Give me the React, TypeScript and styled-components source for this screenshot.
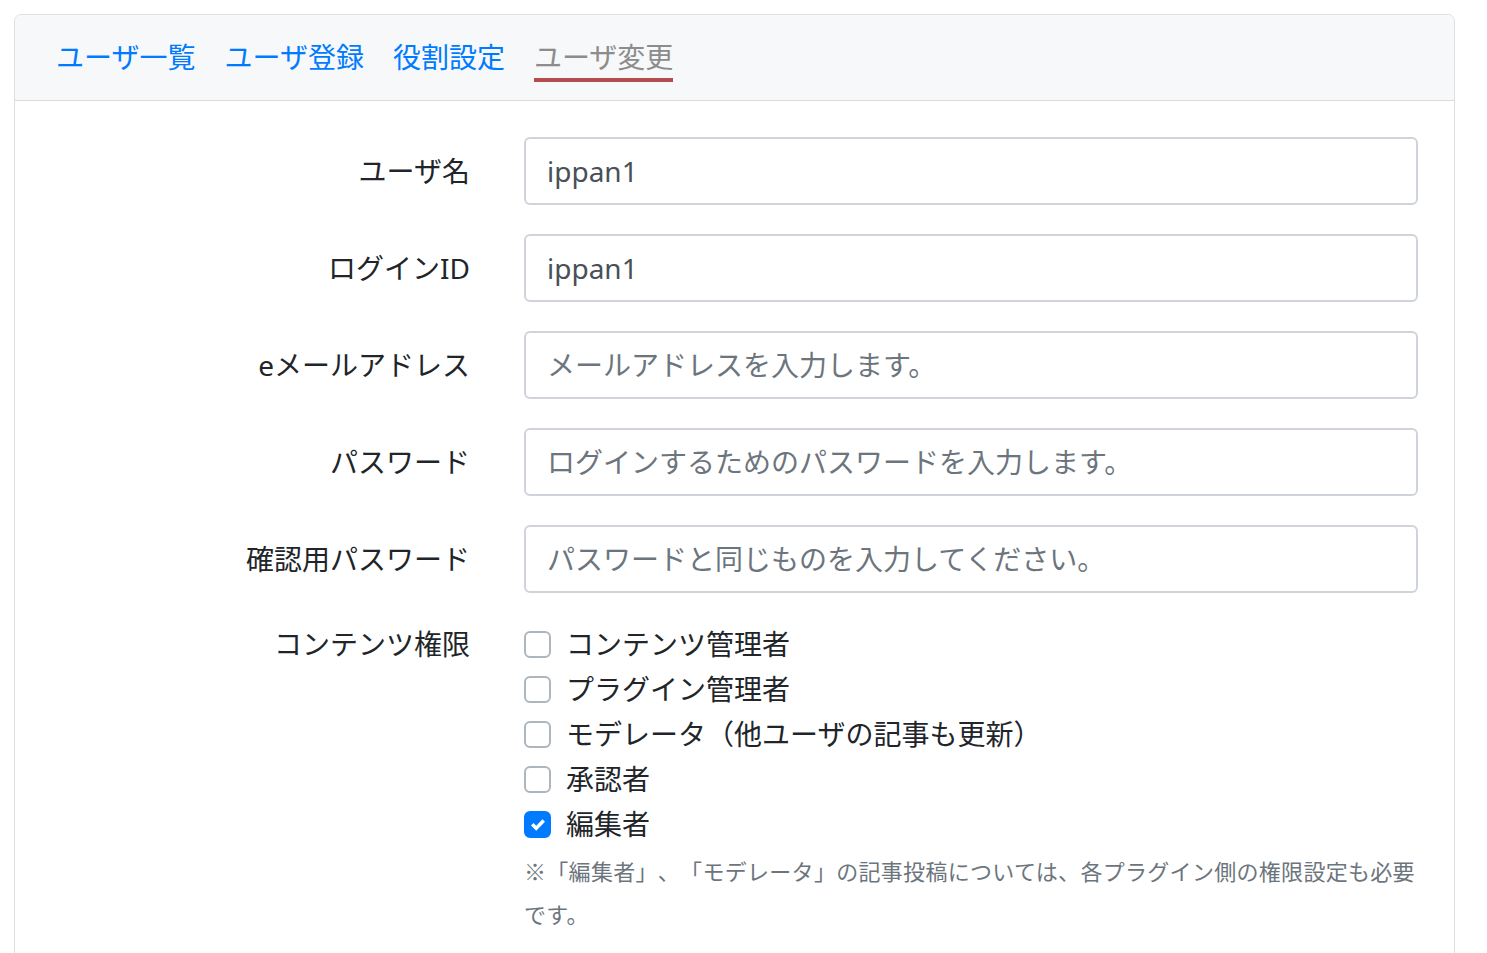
import React from 'react';
import styled, { createGlobalStyle } from 'styled-components';

const GlobalStyle = createGlobalStyle`
  html, body {
    margin: 0;
    padding: 0;
    background: #fff;
  }
  body {
    font-family: "Noto Sans", "Noto Sans CJK JP", sans-serif;
    color: #212529;
  }
`;

interface IRole {
  label: string;
  checked: boolean;
}

const tabs = [
  { title: 'ユーザ一覧', active: false },
  { title: 'ユーザ登録', active: false },
  { title: '役割設定', active: false },
  { title: 'ユーザ変更', active: true },
];

const fields = [
  { label: 'ユーザ名', value: 'ippan1', placeholder: '' },
  { label: 'ログインID', value: 'ippan1', placeholder: '' },
  { label: 'eメールアドレス', value: '', placeholder: 'メールアドレスを入力します。' },
  { label: 'パスワード', value: '', placeholder: 'ログインするためのパスワードを入力します。' },
  { label: '確認用パスワード', value: '', placeholder: 'パスワードと同じものを入力してください。' },
];

const roles: IRole[] = [
  { label: 'コンテンツ管理者', checked: false },
  { label: 'プラグイン管理者', checked: false },
  { label: 'モデレータ（他ユーザの記事も更新）', checked: false },
  { label: '承認者', checked: false },
  { label: '編集者', checked: true },
];

const Page = styled.div`
  padding: 14px 32px 0 14px;
  height: 953px;
  box-sizing: border-box;
  overflow: hidden;
`;

const Card = styled.div`
  border: 1px solid #dfdfdf;
  border-radius: 7px;
  background: #fff;
  min-height: 1000px;
`;

const CardHeader = styled.div`
  display: flex;
  gap: 29px;
  padding: 21px 42px 18px 41px;
  background: #f7f8f9;
  border-bottom: 1px solid #dcdcdc;
  border-radius: 7px 7px 0 0;
`;

const Tab = styled.a<{ active: boolean }>`
  display: block;
  font-size: 28px;
  line-height: 42px;
  color: ${props => (props.active ? '#8c8c8c' : '#007bff')};
  border-bottom: 4px solid ${props => (props.active ? '#b44c4c' : 'transparent')};
  text-decoration: none;
  cursor: pointer;
`;

const CardBody = styled.div`
  padding: 36px;
  display: flex;
  flex-direction: column;
  gap: 29px;
`;

const FormRow = styled.div`
  display: grid;
  grid-template-columns: 419px 1fr;
  column-gap: 54px;
  align-items: center;
`;

const GroupRow = styled(FormRow)`
  align-items: start;
`;

const Label = styled.label`
  text-align: right;
  font-size: 28px;
  line-height: 45px;
  color: #212529;
  white-space: nowrap;
`;

const Input = styled.input`
  box-sizing: border-box;
  width: 100%;
  height: 68px;
  padding: 0 21px;
  border: 2px solid #ced4da;
  border-radius: 6px;
  font-family: "Noto Sans", "Noto Sans CJK JP", sans-serif;
  font-size: 28px;
  color: #495057;
  background: #fff;
  outline: none;

  &::placeholder {
    color: #6c757d;
    opacity: 1;
  }
`;

const CheckList = styled.div`
  display: flex;
  flex-direction: column;
`;

const CheckItem = styled.label`
  display: flex;
  align-items: center;
  gap: 15px;
  font-size: 28px;
  line-height: 45px;
  color: #212529;
  cursor: pointer;
`;

const Box = styled.span<{ checked: boolean }>`
  box-sizing: border-box;
  flex: none;
  width: 27px;
  height: 27px;
  border-radius: 6px;
  border: 2px solid ${props => (props.checked ? '#007bff' : '#adb5bd')};
  background: ${props => (props.checked ? '#007bff' : '#fff')};
  display: flex;
  align-items: center;
  justify-content: center;
`;

const Note = styled.p`
  margin: 2px 0 0;
  font-family: "Noto Sans CJK JP", sans-serif;
  font-size: 22px;
  letter-spacing: 0.3px;
  line-height: 43px;
  color: #6c757d;
  text-spacing-trim: space-all;
`;

const Check = () => (
  <svg width="14" height="14" viewBox="0 0 8 8">
    <path fill="#fff" d="M6.564.75l-3.59 3.612-1.538-1.55L0 4.26 2.974 7.25 8 2.193z" />
  </svg>
);

const App = () => {
  return (
    <Page>
      <GlobalStyle />
      <Card>
        <CardHeader>
          {tabs.map(tab => (
            <Tab key={tab.title} active={tab.active}>
              {tab.title}
            </Tab>
          ))}
        </CardHeader>
        <CardBody>
          {fields.map(field => (
            <FormRow key={field.label}>
              <Label>{field.label}</Label>
              <Input defaultValue={field.value} placeholder={field.placeholder} />
            </FormRow>
          ))}
          <GroupRow>
            <Label>コンテンツ権限</Label>
            <div>
              <CheckList>
                {roles.map(role => (
                  <CheckItem key={role.label}>
                    <Box checked={role.checked}>{role.checked && <Check />}</Box>
                    {role.label}
                  </CheckItem>
                ))}
              </CheckList>
              <Note>※「編集者」、「モデレータ」の記事投稿については、各プラグイン側の権限設定も必要です。</Note>
            </div>
          </GroupRow>
        </CardBody>
      </Card>
    </Page>
  );
};

export default App;
